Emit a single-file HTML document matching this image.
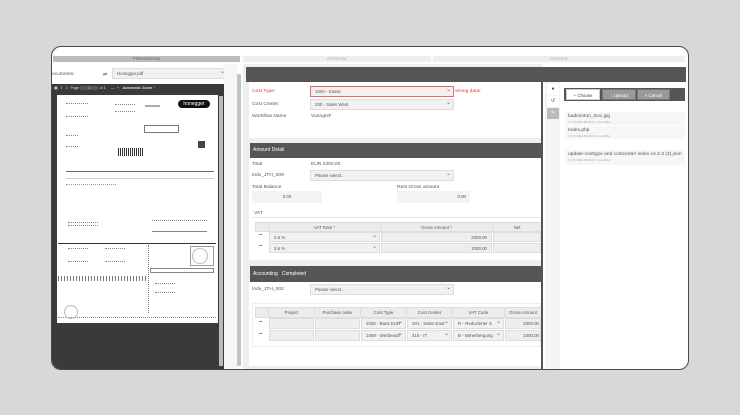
<!DOCTYPE html>
<html><head><meta charset="utf-8"><style>
*{margin:0;padding:0;box-sizing:border-box}
body{width:740px;height:415px;background:#d8d8d8;position:relative;overflow:hidden;font-family:"Liberation Sans",sans-serif;font-size:5px;color:#444}
.a{position:absolute}
.frame{left:51px;top:46px;width:638px;height:324px;background:#fff;border:1.5px solid #3d4b5a;border-radius:10px;overflow:hidden}
.sel{position:absolute;background:#f1f1f1;border:1px solid #ddd;height:11px;padding-left:4px;line-height:9px;font-size:4.4px;color:#555}
.sel:after{content:"⌄";position:absolute;right:2px;top:-1px;font-size:6px;color:#666}
.dark{background:#555;color:#fff}
.lbl{position:absolute;font-size:4.9px;color:#555}
.cell{position:absolute;background:#eee;border:1px solid #ddd;font-size:4.4px;line-height:9px;color:#555}
.th{position:absolute;background:#ececec;border:1px solid #ddd;font-size:4.4px;line-height:9px;text-align:center;color:#555}
.mn{position:absolute;font-size:6px;line-height:9px;color:#333;font-weight:bold}
.btn{position:absolute;top:89px;height:11px;font-size:4.4px;line-height:11px;text-align:center;color:#fff;background:#999;border:1px solid #777}
</style></head><body>
<div class="a frame"></div>
<div class="a" style="left:52px;top:84px;width:172px;height:285px;background:#3a3a3a;border-bottom-left-radius:9px"></div>
<div class="a" style="left:53px;top:56px;width:187px;height:6px;background:#bcbcbc;font-size:3.8px;text-align:center;line-height:6px;color:#555">PREPARATION</div>
<div class="a" style="left:243px;top:56px;width:188px;height:6px;background:#eee;font-size:3.8px;text-align:center;line-height:6px;color:#aaa">APPROVAL</div>
<div class="a" style="left:433px;top:56px;width:252px;height:6px;background:#eee;font-size:3.8px;text-align:center;line-height:6px;color:#aaa">CONTROL</div>
<div class="lbl" style="left:52px;top:72px">ocuments:</div>
<div class="lbl" style="left:103px;top:72px">⇄</div>
<div class="sel" style="left:112px;top:68px;width:116px">Honegger.pdf</div>
<div class="a" style="left:53px;top:85px;width:170px;height:7px;color:#ddd;font-size:3.8px;line-height:7px">&nbsp;▣ &nbsp;⇧ &nbsp;⇩ &nbsp;Page <span style="background:#555;padding:0 8px">1</span> of 1 &nbsp;&nbsp;&nbsp;&nbsp;— &nbsp;+ &nbsp;&nbsp;<b>Automatic Zoom</b> ÷</div>
<div class="a" style="left:57px;top:95px;width:161px;height:228px;background:#fff"></div>
<div class="a" style="left:219px;top:96px;width:4px;height:270px;background:#bbb"></div>
<div class="a" style="left:178px;top:100px;width:32px;height:8px;background:#111;border-radius:4px;color:#fff;font-size:5px;line-height:8px;text-align:center">honegger</div>
<div class="a" style="left:66px;top:103px;width:22px;height:14px;border-top:1px dotted #888;border-bottom:1px dotted #888"></div>
<div class="a" style="left:115px;top:104px;width:20px;height:8px;border-top:1px dotted #888;border-bottom:1px dotted #888"></div>
<div class="a" style="left:145px;top:105px;width:15px;height:2px;background:#aaa"></div>
<div class="a" style="left:144px;top:125px;width:35px;height:8px;border:1px solid #777"></div>
<div class="a" style="left:118px;top:148px;width:25px;height:8px;background:repeating-linear-gradient(90deg,#333 0 1px,#fff 1px 2px)"></div>
<div class="a" style="left:198px;top:141px;width:7px;height:7px;background:#444"></div>
<div class="a" style="left:66px;top:135px;width:12px;height:12px;border-top:1px dotted #888;border-bottom:1px dotted #888"></div>
<div class="a" style="left:66px;top:171px;width:148px;height:1px;background:#666"></div>
<div class="a" style="left:66px;top:178px;width:148px;height:1px;background:#ccc"></div>
<div class="a" style="left:66px;top:184px;width:50px;height:3px;border-top:1px dotted #999"></div>
<div class="a" style="left:68px;top:222px;width:30px;height:4px;border-top:1px dotted #888;border-bottom:1px dotted #888"></div>
<div class="a" style="left:152px;top:220px;width:55px;height:12px;border-top:1px dotted #888;border-bottom:1px solid #888"></div>
<div class="a" style="left:58px;top:243px;width:158px;height:75px;border-top:1px solid #333;border-bottom:1px dotted #888"></div>
<div class="a" style="left:148px;top:245px;width:1px;height:68px;border-left:1px dotted #777"></div>
<div class="a" style="left:190px;top:246px;width:24px;height:20px;border:1px solid #999"></div>
<div class="a" style="left:192px;top:248px;width:16px;height:16px;border-radius:50%;border:1px solid #bbb"></div>
<div class="a" style="left:150px;top:268px;width:64px;height:5px;border:1px solid #888"></div>
<div class="a" style="left:58px;top:276px;width:90px;height:5px;background:repeating-linear-gradient(90deg,#777 0 1px,#fff 1px 3px)"></div>
<div class="a" style="left:64px;top:305px;width:14px;height:14px;border-radius:50%;border:1px solid #bbb"></div>
<div class="a" style="left:68px;top:248px;width:20px;height:14px;border-top:1px dotted #888;border-bottom:1px dotted #888"></div>
<div class="a" style="left:105px;top:248px;width:20px;height:14px;border-top:1px dotted #888;border-bottom:1px dotted #888"></div>
<div class="a" style="left:155px;top:283px;width:20px;height:10px;border-top:1px dotted #888;border-bottom:1px dotted #888"></div>
<div class="a" style="left:224px;top:64px;width:13px;height:305px;background:#f7f7f7"></div>
<div class="a" style="left:237px;top:74px;width:4px;height:292px;background:#c4c4c4"></div>
<div class="a" style="left:243px;top:64px;width:300px;height:305px;background:#efefef"></div>
<div class="a dark" style="left:246px;top:67px;width:297px;height:15px"></div>
<div class="a" style="left:249px;top:82px;width:292px;height:56px;background:#fff"></div>
<div class="lbl" style="left:252px;top:89px;color:#e33">Cost Type:</div>
<div class="sel" style="left:310px;top:86px;width:144px;border-color:#e66">1000 - Kasse</div>
<div class="lbl" style="left:455px;top:89px;color:#e33">wrong data!</div>
<div class="lbl" style="left:252px;top:102px">Cost Center:</div>
<div class="sel" style="left:310px;top:99px;width:144px">200 - Sales West</div>
<div class="lbl" style="left:252px;top:114px">Workflow Name</div>
<div class="lbl" style="left:311px;top:114px">VuongHF</div>
<div class="a dark" style="left:250px;top:143px;width:291px;height:15px;font-size:5px;line-height:15px;padding-left:3px">Amount Detail</div>
<div class="a" style="left:249px;top:158px;width:292px;height:102px;background:#fff"></div>
<div class="lbl" style="left:252px;top:162px">Total</div>
<div class="lbl" style="left:311px;top:162px">EUR 2300.00</div>
<div class="lbl" style="left:252px;top:173px">Indv_JTH_009</div>
<div class="sel" style="left:310px;top:170px;width:144px">Please select...</div>
<div class="lbl" style="left:252px;top:185px">Total Balance</div>
<div class="lbl" style="left:397px;top:185px">Rest Gross amount</div>
<div class="cell" style="left:252px;top:191px;width:70px;height:12px;text-align:center;line-height:10px;background:#f3f3f3;border-color:#f3f3f3">0.00</div>
<div class="cell" style="left:397px;top:191px;width:73px;height:12px;text-align:right;padding-right:3px;line-height:10px;background:#f3f3f3;border-color:#f3f3f3">0.00</div>
<div class="lbl" style="left:254px;top:211px">VAT</div>
<div class="a" style="left:252px;top:217px;width:289px;height:1px;background:#e5e5e5"></div>
<div class="th" style="left:255px;top:222px;width:14px;height:10px"></div>
<div class="th" style="left:268px;top:222px;width:113px;height:10px">VAT Rate *</div>
<div class="th" style="left:380px;top:222px;width:113px;height:10px">Gross Amount *</div>
<div class="th" style="left:492px;top:222px;width:50px;height:10px">Net</div>
<div class="mn" style="left:259px;top:231px">–</div>
<div class="sel" style="left:269px;top:232px;width:111px;height:10px">2.6 %</div>
<div class="cell" style="left:381px;top:232px;width:111px;height:10px;text-align:right;padding-right:4px">2000.00</div>
<div class="cell" style="left:493px;top:232px;width:48px;height:10px"></div>
<div class="mn" style="left:259px;top:242px">–</div>
<div class="sel" style="left:269px;top:243px;width:111px;height:10px">3.6 %</div>
<div class="cell" style="left:381px;top:243px;width:111px;height:10px;text-align:right;padding-right:4px">1000.00</div>
<div class="cell" style="left:493px;top:243px;width:48px;height:10px"></div>
<div class="a dark" style="left:250px;top:266px;width:291px;height:16px;font-size:5px;line-height:16px;padding-left:3px">Accounting &nbsp;&nbsp;Completed</div>
<div class="a" style="left:249px;top:282px;width:292px;height:84px;background:#fff"></div>
<div class="lbl" style="left:252px;top:287px">Indv_JTH_002</div>
<div class="sel" style="left:310px;top:284px;width:144px">Please select...</div>
<div class="a" style="left:252px;top:303px;width:289px;height:44px;border:1px solid #eee"></div>
<div class="th" style="left:255px;top:307px;width:14px;height:11px"></div>
<div class="th" style="left:268px;top:307px;width:47px;height:11px">Project</div>
<div class="th" style="left:314px;top:307px;width:47px;height:11px">Purchase order</div>
<div class="th" style="left:360px;top:307px;width:47px;height:11px">Cost Type</div>
<div class="th" style="left:406px;top:307px;width:47px;height:11px">Cost Center</div>
<div class="th" style="left:452px;top:307px;width:53px;height:11px">VAT Code</div>
<div class="th" style="left:504px;top:307px;width:38px;height:11px">Gross Amount</div>
<div class="mn" style="left:259px;top:318px">–</div>
<div class="cell" style="left:269px;top:318px;width:45px;height:11px"></div>
<div class="cell" style="left:315px;top:318px;width:45px;height:11px"></div>
<div class="sel" style="left:361px;top:318px;width:45px;height:11px">1025 - Bank EUR</div>
<div class="sel" style="left:407px;top:318px;width:45px;height:11px">201 - Sales East</div>
<div class="sel" style="left:453px;top:318px;width:51px;height:11px">R - Reduzierter S</div>
<div class="cell" style="left:505px;top:318px;width:36px;height:11px;text-align:right;padding-right:1px">2000.00</div>
<div class="mn" style="left:259px;top:330px">–</div>
<div class="cell" style="left:269px;top:330px;width:45px;height:11px"></div>
<div class="cell" style="left:315px;top:330px;width:45px;height:11px"></div>
<div class="sel" style="left:361px;top:330px;width:45px;height:11px">1069 - Werbeaufl</div>
<div class="sel" style="left:407px;top:330px;width:45px;height:11px">410 - IT</div>
<div class="sel" style="left:453px;top:330px;width:51px;height:11px">B - Beherbergung</div>
<div class="cell" style="left:505px;top:330px;width:36px;height:11px;text-align:right;padding-right:1px">1000.00</div>
<div class="a" style="left:541px;top:67px;width:2px;height:302px;background:#555"></div>
<div class="a dark" style="left:543px;top:67px;width:143px;height:15px"></div>
<div class="a" style="left:545px;top:82px;width:15px;height:287px;background:#f4f4f4"></div>
<div class="a" style="left:547px;top:84px;width:12px;height:11px;background:#fff;font-size:5px;text-align:center;line-height:11px">●</div>
<div class="a" style="left:547px;top:96px;width:12px;height:11px;background:#fff;font-size:5px;text-align:center;line-height:11px">↺</div>
<div class="a" style="left:547px;top:108px;width:12px;height:11px;background:#bbb;color:#fff;font-size:5px;text-align:center;line-height:11px">✎</div>
<div class="a" style="left:564px;top:88px;width:121px;height:13px;background:#555"></div>
<div class="btn" style="left:566px;width:34px;background:#fff;color:#444;border-color:#ccc">+ Choose</div>
<div class="btn" style="left:602px;width:34px">↑ Upload</div>
<div class="btn" style="left:637px;width:33px">× Cancel</div>
<div class="a" style="left:565px;top:112px;width:120px;height:13px;background:#f6f6f6"></div>
<div class="a" style="left:565px;top:126px;width:120px;height:13px;background:#f6f6f6"></div>
<div class="a" style="left:565px;top:150px;width:120px;height:15px;background:#f6f6f6"></div>
<div class="lbl" style="left:568px;top:114px;color:#555">badminton_Doc.jpg</div>
<div class="lbl" style="left:568px;top:120px;font-size:3px;color:#aaa">17.05.2022 09:46:03 &nbsp;Lisa Miller</div>
<div class="lbl" style="left:568px;top:128px;color:#555">Index.php</div>
<div class="lbl" style="left:568px;top:134px;font-size:3px;color:#aaa">17.05.2022 09:46:06 &nbsp;Lisa Miller</div>
<div class="lbl" style="left:568px;top:152px;color:#555;white-space:nowrap">update-costtype and costcenter index v4.2.3 (2).json</div>
<div class="lbl" style="left:568px;top:158px;font-size:3px;color:#aaa">17.05.2022 09:29:02 &nbsp;Lisa Miller</div>
</body></html>
